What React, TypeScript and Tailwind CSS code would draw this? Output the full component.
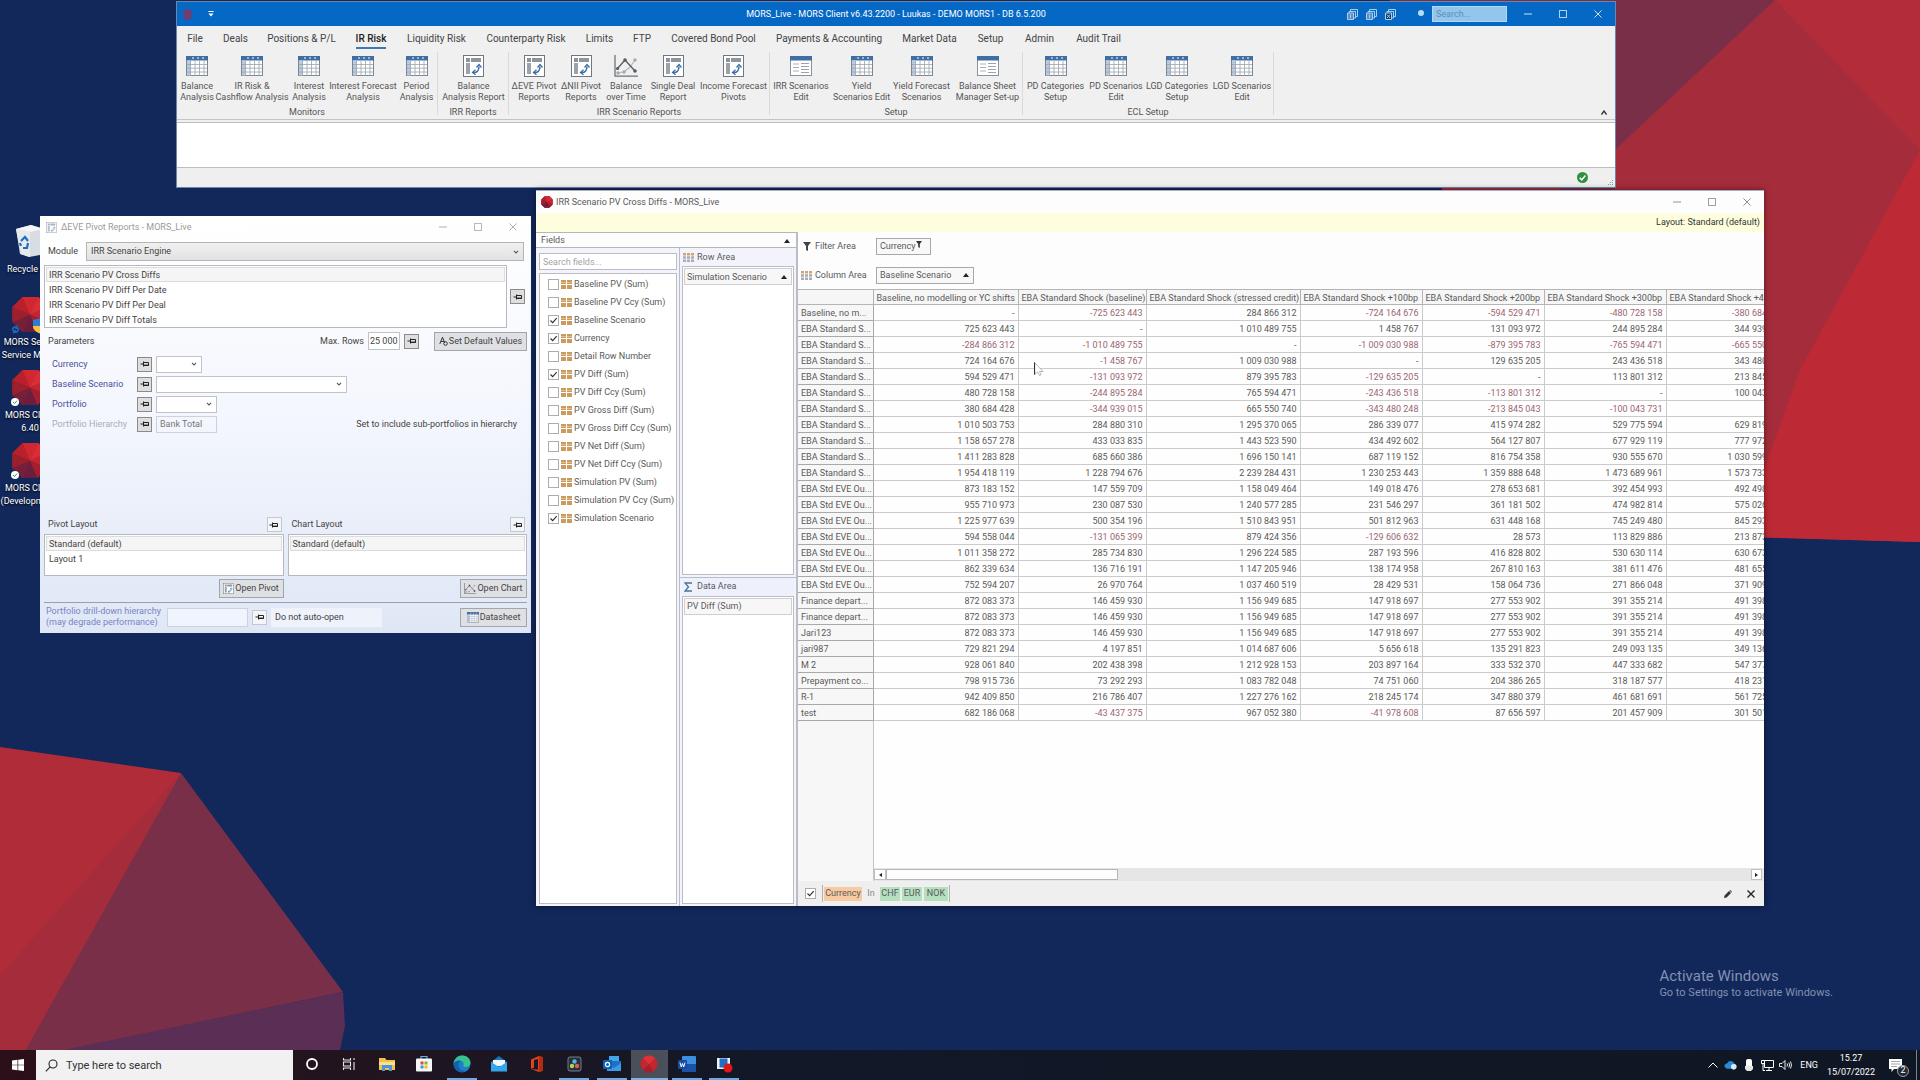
import React, { ReactNode } from "react";

/* ---------- small shared icons ---------- */

const PinIcon = () => (
  <svg viewBox="0 0 10 10" className="h-[10px] w-[10px]" fill="none" stroke="#222" strokeWidth="1">
    <path d="M0.5 5H3.5M3.5 2.5V7.5M3.5 3.5H8.5V6.5H3.5" />
    <path d="M3.5 6.3H8.5" strokeWidth="1.4" />
  </svg>
);

const TableIcon = ({ className = "h-5 w-[22px]" }: { className?: string }) => (
  <svg viewBox="0 0 22 20" className={className}>
    <rect x="0.5" y="0.5" width="21" height="19" fill="#fff" stroke="#7d8793" />
    <rect x="0" y="0" width="22" height="4.5" fill="#3f6ea5" />
    <rect x="1" y="4.5" width="3.5" height="15" fill="#b9cbe0" />
    <path d="M7 1.2v1.6M12 1.2v1.6M17 1.2v1.6" stroke="#dbe6f2" strokeWidth="1.6" />
    <path d="M4.5 5v15M9 5v15M13.5 5v15M18 5v15M1 8.5h20M1 12.2h20M1 16h20" stroke="#9aa3ad" strokeWidth="0.8" />
  </svg>
);

const FormIcon = () => (
  <svg viewBox="0 0 22 20" className="h-5 w-[22px]">
    <rect x="0.5" y="0.5" width="21" height="19" fill="#fff" stroke="#8a929b" />
    <rect x="0" y="0" width="22" height="4.5" fill="#3f6ea5" />
    <path d="M3 8h6M3 11.5h6M3 15h6" stroke="#a9b0b8" />
    <path d="M11 7.5h8M11 10.5h8M11 13.5h8M11 16.5h8" stroke="#9aa2ab" />
  </svg>
);

const PivotIcon = ({ className = "h-[22px] w-[21px]" }: { className?: string }) => (
  <svg viewBox="0 0 21 22" className={className}>
    <rect x="0.5" y="0.5" width="20" height="21" fill="#fff" stroke="#6f7780" />
    <rect x="3" y="3" width="4" height="4" fill="#8d949c" />
    <rect x="8" y="3" width="10" height="4" fill="#8d949c" />
    <rect x="3" y="8" width="4" height="11" fill="#9ba2a9" />
    <path d="M10 17.5c4 .5 6-2 6-6" fill="none" stroke="#3a6ea5" strokeWidth="1.5" />
    <path d="M13.5 12.5 16 9.5l2.5 3M12.5 14.8 9.5 17.4l3 2.4" fill="none" stroke="#3a6ea5" strokeWidth="1.3" />
  </svg>
);

const ChartIcon = ({ className = "h-[22px] w-[24px]" }: { className?: string }) => (
  <svg viewBox="0 0 24 22" className={className} fill="none">
    <path d="M1 0v21.2h23" stroke="#6d7379" strokeWidth="1.3" />
    <path d="M3 18 10 17 16 12 21 5" stroke="#b3b7bb" strokeWidth="1.2" />
    <path d="M3 14 11 5l10 11" stroke="#555b62" strokeWidth="1.3" />
    <g fill="#555b62">
      <circle cx="3.5" cy="13.5" r="1.6" />
      <circle cx="11" cy="5" r="1.8" />
      <circle cx="21" cy="16" r="1.8" />
    </g>
    <g fill="#a5aaaf">
      <circle cx="4" cy="18" r="1.7" />
      <circle cx="10" cy="17" r="1.7" />
      <circle cx="21" cy="5" r="1.7" />
    </g>
  </svg>
);

const Chevron = () => (
  <svg viewBox="0 0 6 4" className="pointer-events-none absolute right-[5px] top-1/2 h-1 w-[6px] -translate-y-1/2" fill="none" stroke="#555">
    <path d="M1 .8 3 3 5 .8" strokeWidth="1.1" />
  </svg>
);

const UpTriangle = () => (
  <svg viewBox="0 0 6 4" className="h-1 w-[6px]">
    <path d="M0 4 3 0l3 4z" fill="#222" />
  </svg>
);

const GridDots = () => (
  <svg viewBox="0 0 11 9" className="h-[9px] w-[11px]">
    <path d="M0 0h3v2.4H0zM4 0h3v2.4H4zM8 0h3v2.4H8z" fill="#c9a77c" />
    <path d="M0 3.3h3v2.4H0zM4 3.3h3v2.4H4zM8 3.3h3v2.4H8zM0 6.6h3V9H0zM4 6.6h3V9H4zM8 6.6h3V9H8z" fill="#a9adb2" />
  </svg>
);

const FieldIcon = () => (
  <svg viewBox="0 0 11 9" className="h-[9px] w-[11px] shrink-0">
    <path d="M0 0h5v4H0zM6 0h5v4H6zM0 5h5v4H0zM6 5h5v4H6z" fill="#cc9a5f" />
    <path d="M0 2.5h5M6 2.5h5" stroke="#e6cba8" strokeWidth=".7" />
  </svg>
);

const Gem = ({ className }: { className: string }) => (
  <svg viewBox="0 0 40 40" className={className}>
    <path d="M12 1h17l10 11v16L28 39H12L1 28V12z" fill="#b3222c" />
    <path d="M12 1 20 20 1 12z" fill="#b8202b" />
    <path d="M12 1h17L20 20z" fill="#cf2831" />
    <path d="M29 1l10 11-19 8z" fill="#d92e35" />
    <path d="M39 12v16L20 20z" fill="#c32630" />
    <path d="M39 28 28 39l-8-19z" fill="#a31f2e" />
    <path d="M28 39H12l8-19z" fill="#6a1d3d" />
    <path d="M12 39 1 28l19-8z" fill="#74203a" />
    <path d="M1 28V12l19 8z" fill="#9c1f2d" />
  </svg>
);

/* ---------- window chrome ---------- */

const WindowButtons = ({ className, gap }: { className: string; gap: string }) => (
  <div className={`flex items-center ${gap} ${className}`}>
    <button aria-label="Minimize" className="flex h-4 w-4 items-center justify-center">
      <svg viewBox="0 0 10 10" className="h-2 w-2" stroke="currentColor"><path d="M0 5h10" /></svg>
    </button>
    <button aria-label="Maximize" className="flex h-4 w-4 items-center justify-center">
      <svg viewBox="0 0 10 10" className="h-2 w-2" fill="none" stroke="currentColor"><path d="M.5.5h9v9h-9z" /></svg>
    </button>
    <button aria-label="Close" className="flex h-4 w-4 items-center justify-center">
      <svg viewBox="0 0 10 10" className="h-2 w-2" stroke="currentColor"><path d="M.5.5l9 9M9.500.5l-9 9" /></svg>
    </button>
  </div>
);

/* ---------- wallpaper ---------- */

const Wallpaper = () => (
  <svg viewBox="0 0 1920 1080" preserveAspectRatio="none" className="absolute inset-0 h-full w-full">
    <rect width="1920" height="1080" fill="#12275a" />
    <path d="M1390 0H1920V542L1764 537 1500 400z" fill="#a52d3b" />
    <path d="M1390 0H1775L1615 150V250z" fill="#7a2f49" />
    <path d="M1775 0H1920V150z" fill="#b32c39" />
    <path d="M1920 150V542L1740 537 1800 370z" fill="#bd2a36" />
    <path d="M0 747 181 773 0 1050z" fill="#b02c39" />
    <path d="M181 773 0 975V1060H20L110 1000z" fill="#a52d3b" />
    <path d="M181 773 343 992 20 1060z" fill="#7a2f49" />
    <path d="M343 992 345 1026 338 1060H15z" fill="#5a2e55" />
  </svg>
);

/* ---------- main client window ---------- */

const TABS: [string, string][] = [
  ["File", "w-9"],
  ["Deals", "w-[45px]"],
  ["Positions & P/L", "w-[87px]"],
  ["IR Risk", "w-[52px]"],
  ["Liquidity Risk", "w-[79px]"],
  ["Counterparty Risk", "w-[100px]"],
  ["Limits", "w-[47px]"],
  ["FTP", "w-[38px]"],
  ["Covered Bond Pool", "w-[105px]"],
  ["Payments & Accounting", "w-[126px]"],
  ["Market Data", "w-[75px]"],
  ["Setup", "w-[47px]"],
  ["Admin", "w-[51px]"],
  ["Audit Trail", "w-[67px]"],
];

type Tool = { a: string; b: string; w: string; icon: "table" | "form" | "pivot" | "chart" };
const GROUPS: { name: string; tools: Tool[] }[] = [
  {
    name: "Monitors",
    tools: [
      { a: "Balance", b: "Analysis", w: "w-10", icon: "table" },
      { a: "IR Risk &", b: "Cashflow Analysis", w: "w-[70px]", icon: "table" },
      { a: "Interest", b: "Analysis", w: "w-11", icon: "table" },
      { a: "Interest Forecast", b: "Analysis", w: "w-16", icon: "table" },
      { a: "Period", b: "Analysis", w: "w-[43px]", icon: "table" },
    ],
  },
  { name: "IRR Reports", tools: [{ a: "Balance", b: "Analysis Report", w: "w-[71px]", icon: "pivot" }] },
  {
    name: "IRR Scenario Reports",
    tools: [
      { a: "ΔEVE Pivot", b: "Reports", w: "w-[50px]", icon: "pivot" },
      { a: "ΔNII Pivot", b: "Reports", w: "w-11", icon: "pivot" },
      { a: "Balance", b: "over Time", w: "w-[46px]", icon: "chart" },
      { a: "Single Deal", b: "Report", w: "w-12", icon: "pivot" },
      { a: "Income Forecast", b: "Pivots", w: "w-[73px]", icon: "pivot" },
    ],
  },
  {
    name: "Setup",
    tools: [
      { a: "IRR Scenarios", b: "Edit", w: "w-[62px]", icon: "form" },
      { a: "Yield", b: "Scenarios Edit", w: "w-[59px]", icon: "table" },
      { a: "Yield Forecast", b: "Scenarios", w: "w-[61px]", icon: "table" },
      { a: "Balance Sheet", b: "Manager Set-up", w: "w-[71px]", icon: "form" },
    ],
  },
  {
    name: "ECL Setup",
    tools: [
      { a: "PD Categories", b: "Setup", w: "w-[65px]", icon: "table" },
      { a: "PD Scenarios", b: "Edit", w: "w-14", icon: "table" },
      { a: "LGD Categories", b: "Setup", w: "w-[66px]", icon: "table" },
      { a: "LGD Scenarios", b: "Edit", w: "w-16", icon: "table" },
    ],
  },
];

const ToolGlyph = ({ icon }: { icon: Tool["icon"] }) =>
  icon === "table" ? <TableIcon /> : icon === "form" ? <FormIcon /> : icon === "pivot" ? <PivotIcon /> : <ChartIcon />;

const StackIcon = ({ x }: { x?: boolean }) => (
  <svg viewBox="0 0 11 11" className="h-[11px] w-[11px]" fill="none" stroke="#a9cdf0" strokeWidth="1">
    <path d="M3.500 2.500V.5h7v7H8.500" />
    <path d="M2 4V2.500h6.500V9H7" />
    <path d="M.5 4h6v6.500h-6z" fill={x ? "#17395f" : "#5b8fc4"} />
    {x ? <path d="M2 5.500 5 9M5 5.500 2 9" /> : <path d="M3.500 5.500v3.500" />}
  </svg>
);

const MainWindow = () => (
  <section className="absolute left-[176px] top-px flex h-[187px] w-[1440px] flex-col border border-[#6d87a8] bg-[#f0f0f0]">
    <header className="relative flex h-6 shrink-0 items-center bg-[#0568c5] px-[6px] text-white">
      <span className="h-[11px] w-[9px] rounded-full bg-[#6b3f74]" />
      <svg viewBox="0 0 6 7" className="ml-4 h-[6px] w-[6px]"><path d="M0 0h6v1.200H0zM0 3h6L3 6.500z" fill="#fff" /></svg>
      <h1 className="absolute inset-x-0 text-center text-[9px] leading-3">MORS_Live - MORS Client v6.43.2200 - Luukas - DEMO MORS1 - DB 6.5.200</h1>
      <div className="relative ml-auto flex items-center">
        <div className="mr-[22px] flex gap-2">
          <StackIcon />
          <StackIcon />
          <StackIcon x />
        </div>
        <span className="mr-2 h-[6px] w-[6px] -translate-y-px rounded-full bg-[#b9dcfa]" />
        <input aria-label="Search" placeholder="Search..." className="h-4 w-[75px] border border-[#b7d8f3] bg-[#92c6ec] px-[3px] text-[9px] text-[#2e5f8f] placeholder-[#5d8db8]" />
        <WindowButtons className="ml-[13px] mr-[3px] text-white" gap="gap-[19px]" />
      </div>
    </header>

    <nav className="flex h-6 shrink-0 items-center text-[10px] leading-[13px] text-[#444]">
      {TABS.map(([t, w]) => (
        <button key={t} className={`flex justify-center whitespace-nowrap ${w}`}>
          <span className={t === "IR Risk" ? "mt-[5px] border-b-2 border-[#3d78b5] pb-0.5 font-medium text-[#222]" : ""}>{t}</span>
        </button>
      ))}
    </nav>

    <div className="flex h-[70px] shrink-0 border-b border-[#c4c4c4] pt-0.5 text-[9px] leading-[11px] text-[#555]">
      {GROUPS.map((g) => (
        <div key={g.name} className="mb-1 flex flex-col border-r border-[#dadada]">
          <div className="-mr-px flex">
            {g.tools.map((t) => (
              <button key={t.a + t.b} className={`flex flex-col items-center whitespace-nowrap ${t.w}`}>
                <span className="mb-px flex h-7 items-center"><ToolGlyph icon={t.icon} /></span>
                <span>{t.a}</span>
                <span>{t.b}</span>
              </button>
            ))}
          </div>
          <div className="mt-1 text-center">{g.name}</div>
        </div>
      ))}
      <button aria-label="Collapse ribbon" className="mb-1 ml-auto mr-2 self-end">
        <svg viewBox="0 0 6 5" className="h-[5px] w-[6px]" fill="none" stroke="#333" strokeWidth="1.300"><path d="M.5 4.500 3 1l2.500 3.500" /></svg>
      </button>
    </div>

    <div className="mt-0.5 flex-1 border-y border-[#bdbdbd] bg-white" />

    <footer className="relative flex h-[19px] shrink-0 items-center justify-end bg-[#efefef] pr-[27px]">
      <svg viewBox="0 0 12 12" className="h-[11px] w-[11px]">
        <circle cx="6" cy="6" r="6" fill="#2f9140" />
        <path d="M3 6.200 5.200 8.500 9.200 3.800" fill="none" stroke="#fff" strokeWidth="1.600" />
      </svg>
      <svg viewBox="0 0 6 6" className="absolute bottom-px right-px h-[6px] w-[6px]"><path d="M4 0h1v1H4zM2 2h1v1H2zM4 2h1v1H4zM0 4h1v1H0zM2 4h1v1H2zM4 4h1v1H4z" fill="#999" /></svg>
    </footer>
  </section>
);

/* ---------- pivot reports window ---------- */

const PinButton = ({ flat }: { flat?: boolean }) => (
  <button
    aria-label="Pin"
    className={`flex h-[15px] w-[15px] shrink-0 items-center justify-center border ${flat ? "border-[#c4c8d0] bg-[#f4f5f9]" : "border-[#8a8a8a] bg-[#dedede]"}`}
  >
    <PinIcon />
  </button>
);

const Combo = ({ id, width }: { id: string; width: string }) => (
  <div className={`relative ${width}`}>
    <select id={id} className="block h-[17px] w-full appearance-none border border-[#c0c3ca] bg-white"><option></option></select>
    <Chevron />
  </div>
);

const Param = ({ id, label, dim, children }: { id: string; label: string; dim?: boolean; children: ReactNode }) => (
  <div className="flex h-5 items-center">
    <label htmlFor={id} className={`w-[85px] ${dim ? "text-[#a9adb8]" : "text-[#4c4fa0]"}`}>{label}</label>
    <PinButton />
    <div className="ml-1 flex flex-1 items-center">{children}</div>
  </div>
);

const ListBox = ({ items, className = "" }: { items: string[]; className?: string }) => (
  <ul className={`border border-[#b5b8c0] bg-white p-px ${className}`}>
    {items.map((t, i) => (
      <li key={t} className={`flex h-[15px] items-center px-0.5 pt-px ${i === 0 ? "border border-[#dcdcdc] bg-[#f5f5f5]" : "border border-transparent"}`}>{t}</li>
    ))}
  </ul>
);

const GreyButton = ({ children, width }: { children: ReactNode; width: string }) => (
  <button className={`flex h-[19px] items-center justify-center gap-px whitespace-nowrap border border-[#a3a5ab] bg-[#dfe0e4] ${width}`}>{children}</button>
);

const ReportsWindow = () => (
  <section className="absolute left-10 top-[216px] flex h-[417px] w-[491px] flex-col bg-gradient-to-b from-white via-[#f3f6fd] to-[#dfe7f6] text-[9px] leading-[11px] text-[#444]">
    <header className="flex h-[22px] items-center pl-[6px] pr-[10px] text-[#9b9b9b]">
      <PivotIcon className="h-[11px] w-[11px] opacity-70" />
      <h2 className="ml-1">ΔEVE Pivot Reports - MORS_Live</h2>
      <WindowButtons className="ml-auto text-[#9b9b9b]" gap="gap-[19px]" />
    </header>

    <div className="mt-1 flex items-center pl-2 pr-[7px]">
      <label htmlFor="module" className="w-[38px]">Module</label>
      <div className="relative flex-1">
        <select id="module" className="block h-[19px] w-full appearance-none border border-[#b4b4b4] bg-gradient-to-b from-[#f0f0f0] to-[#e2e2e2] px-1">
          <option>IRR Scenario Engine</option>
        </select>
        <Chevron />
      </div>
    </div>

    <div className="mt-1 flex items-center gap-[3px] pl-1 pr-[6px]">
      <ListBox className="h-[63px] flex-1" items={["IRR Scenario PV Cross Diffs", "IRR Scenario PV Diff Per Date", "IRR Scenario PV Diff Per Deal", "IRR Scenario PV Diff Totals"]} />
      <PinButton />
    </div>

    <div className="mt-[3px] flex h-5 items-center pl-2 pr-1">
      <h3>Parameters</h3>
      <label htmlFor="max-rows" className="ml-auto">Max. Rows</label>
      <input id="max-rows" defaultValue="25 000" className="ml-1 h-[18px] w-8 border border-[#c0c3ca] bg-white px-px" />
      <span className="ml-1 mr-[15px] flex"><PinButton /></span>
      <GreyButton width="w-[93px]">
        <svg viewBox="0 0 9 10" className="h-[10px] w-[9px]" fill="none" stroke="#333">
          <path d="M.8 8 3.500 1.200 5.800 7M1.800 5.500h3" />
          <circle cx="6.500" cy="7.500" r="1.800" />
        </svg>
        Set Default Values
      </GreyButton>
    </div>

    <div className="mt-[3px] flex flex-col pl-3 pr-[14px]">
      <Param id="ccy" label="Currency"><Combo id="ccy" width="w-[46px]" /></Param>
      <Param id="base" label="Baseline Scenario"><Combo id="base" width="w-[191px]" /></Param>
      <Param id="port" label="Portfolio"><Combo id="port" width="w-[61px]" /></Param>
      <Param id="hier" label="Portfolio Hierarchy" dim>
        <input id="hier" readOnly defaultValue="Bank Total" className="h-[17px] w-[61px] border border-[#cdd1da] bg-transparent px-[3px] text-[#777]" />
        <span className="ml-auto">Set to include sub-portfolios in hierarchy</span>
      </Param>
    </div>

    <div className="mt-auto flex gap-1 px-1">
      {[
        { title: "Pivot Layout", items: ["Standard (default)", "Layout 1"], btn: "Open Pivot", w: "w-[65px]", icon: <PivotIcon className="h-[11px] w-[11px]" /> },
        { title: "Chart Layout", items: ["Standard (default)"], btn: "Open Chart", w: "w-[67px]", icon: <ChartIcon className="h-[11px] w-[12px]" /> },
      ].map((p) => (
        <div key={p.title} className="flex flex-1 flex-col">
          <div className="flex items-center justify-between px-0.5 pb-0.5">
            <h3 className="pl-0.5">{p.title}</h3>
            <PinButton flat />
          </div>
          <ListBox className="h-[42px]" items={p.items} />
          <div className="mt-[3px] flex justify-end"><GreyButton width={p.w}>{p.icon}{p.btn}</GreyButton></div>
        </div>
      ))}
    </div>

    <footer className="mx-1 mb-[5px] mt-1 flex items-center border-t border-[#9aa0aa] pt-[3px]">
      <label htmlFor="drill" className="w-[119px] whitespace-nowrap pl-0.5 text-[#7a84c4]">Portfolio drill-down hierarchy<br />(may degrade performance)</label>
      <input id="drill" className="ml-1 h-[19px] w-[81px] border border-[#ccd2de] bg-[#f0f4fc]" />
      <span className="mx-1 flex"><PinButton flat /></span>
      <input aria-label="Auto-open" readOnly defaultValue="Do not auto-open" className="h-[19px] w-[111px] bg-[#eef2fb] px-1" />
      <span className="ml-auto"><GreyButton width="w-[67px]"><TableIcon className="h-[11px] w-[12px]" /> Datasheet</GreyButton></span>
    </footer>
  </section>
);

/* ---------- cross diffs window ---------- */

const FIELDS: [string, boolean][] = [
  ["Baseline PV (Sum)", false],
  ["Baseline PV Ccy (Sum)", false],
  ["Baseline Scenario", true],
  ["Currency", true],
  ["Detail Row Number", false],
  ["PV Diff (Sum)", true],
  ["PV Diff Ccy (Sum)", false],
  ["PV Gross Diff (Sum)", false],
  ["PV Gross Diff Ccy (Sum)", false],
  ["PV Net Diff (Sum)", false],
  ["PV Net Diff Ccy (Sum)", false],
  ["Simulation PV (Sum)", false],
  ["Simulation PV Ccy (Sum)", false],
  ["Simulation Scenario", true],
];

const COLS: [string, string][] = [
  ["Baseline, no modelling or YC shifts", "w-[145px]"],
  ["EBA Standard Shock (baseline)", "w-[128px]"],
  ["EBA Standard Shock (stressed credit)", "w-[154px]"],
  ["EBA Standard Shock +100bp", "w-[122px]"],
  ["EBA Standard Shock +200bp", "w-[122px]"],
  ["EBA Standard Shock +300bp", "w-[122px]"],
  ["EBA Standard Shock +400bp", "w-[122px]"],
];

const ROWS: string[][] = [
  ["Baseline, no m...", "-", "-725 623 443", "284 866 312", "-724 164 676", "-594 529 471", "-480 728 158", "-380 684 428"],
  ["EBA Standard S...", "725 623 443", "-", "1 010 489 755", "1 458 767", "131 093 972", "244 895 284", "344 939 015"],
  ["EBA Standard S...", "-284 866 312", "-1 010 489 755", "-", "-1 009 030 988", "-879 395 783", "-765 594 471", "-665 550 740"],
  ["EBA Standard S...", "724 164 676", "-1 458 767", "1 009 030 988", "-", "129 635 205", "243 436 518", "343 480 248"],
  ["EBA Standard S...", "594 529 471", "-131 093 972", "879 395 783", "-129 635 205", "-", "113 801 312", "213 845 043"],
  ["EBA Standard S...", "480 728 158", "-244 895 284", "765 594 471", "-243 436 518", "-113 801 312", "-", "100 043 731"],
  ["EBA Standard S...", "380 684 428", "-344 939 015", "665 550 740", "-343 480 248", "-213 845 043", "-100 043 731", "-"],
  ["EBA Standard S...", "1 010 503 753", "284 880 310", "1 295 370 065", "286 339 077", "415 974 282", "529 775 594", "629 819 325"],
  ["EBA Standard S...", "1 158 657 278", "433 033 835", "1 443 523 590", "434 492 602", "564 127 807", "677 929 119", "777 972 850"],
  ["EBA Standard S...", "1 411 283 828", "685 660 386", "1 696 150 141", "687 119 152", "816 754 358", "930 555 670", "1 030 599 401"],
  ["EBA Standard S...", "1 954 418 119", "1 228 794 676", "2 239 284 431", "1 230 253 443", "1 359 888 648", "1 473 689 961", "1 573 733 691"],
  ["EBA Std EVE Ou...", "873 183 152", "147 559 709", "1 158 049 464", "149 018 476", "278 653 681", "392 454 993", "492 498 724"],
  ["EBA Std EVE Ou...", "955 710 973", "230 087 530", "1 240 577 285", "231 546 297", "361 181 502", "474 982 814", "575 026 545"],
  ["EBA Std EVE Ou...", "1 225 977 639", "500 354 196", "1 510 843 951", "501 812 963", "631 448 168", "745 249 480", "845 293 211"],
  ["EBA Std EVE Ou...", "594 558 044", "-131 065 399", "879 424 356", "-129 606 632", "28 573", "113 829 886", "213 873 616"],
  ["EBA Std EVE Ou...", "1 011 358 272", "285 734 830", "1 296 224 585", "287 193 596", "416 828 802", "530 630 114", "630 673 844"],
  ["EBA Std EVE Ou...", "862 339 634", "136 716 191", "1 147 205 946", "138 174 958", "267 810 163", "381 611 476", "481 655 206"],
  ["EBA Std EVE Ou...", "752 594 207", "26 970 764", "1 037 460 519", "28 429 531", "158 064 736", "271 866 048", "371 909 779"],
  ["Finance depart...", "872 083 373", "146 459 930", "1 156 949 685", "147 918 697", "277 553 902", "391 355 214", "491 398 945"],
  ["Finance depart...", "872 083 373", "146 459 930", "1 156 949 685", "147 918 697", "277 553 902", "391 355 214", "491 398 945"],
  ["Jari123", "872 083 373", "146 459 930", "1 156 949 685", "147 918 697", "277 553 902", "391 355 214", "491 398 945"],
  ["jari987", "729 821 294", "4 197 851", "1 014 687 606", "5 656 618", "135 291 823", "249 093 135", "349 136 866"],
  ["M 2", "928 061 840", "202 438 398", "1 212 928 153", "203 897 164", "333 532 370", "447 333 682", "547 377 412"],
  ["Prepayment co...", "798 915 736", "73 292 293", "1 083 782 048", "74 751 060", "204 386 265", "318 187 577", "418 231 308"],
  ["R-1", "942 409 850", "216 786 407", "1 227 276 162", "218 245 174", "347 880 379", "461 681 691", "561 725 422"],
  ["test", "682 186 068", "-43 437 375", "967 052 380", "-41 978 608", "87 656 597", "201 457 909", "301 501 640"],
];

const CheckBox = ({ id, checked }: { id: string; checked: boolean }) => (
  <span className="relative flex h-[11px] w-[11px] shrink-0">
    <input id={id} type="checkbox" defaultChecked={checked} className="peer h-[11px] w-[11px] appearance-none border border-[#adadad] bg-white" />
    <svg viewBox="0 0 11 11" className="pointer-events-none absolute inset-0 hidden h-[11px] w-[11px] peer-checked:block" fill="none" stroke="#333" strokeWidth="1.200">
      <path d="M2.500 5.500 4.700 7.700 8.700 3.200" />
    </svg>
  </span>
);

const FieldsPanel = () => (
  <aside className="flex w-[262px] shrink-0 flex-col border-r-2 border-[#b9bcc9] bg-[#f3f4fb] text-[9px] leading-[11px]">
    <header className="flex h-4 shrink-0 items-center justify-between border-b border-t border-[#b5b5bb] bg-[#fdfdfd] pl-[5px] pr-[6px] pt-px">
      <h3>Fields</h3>
      <UpTriangle />
    </header>
    <div className="flex min-h-0 flex-1">
      <div className="flex w-[144px] flex-col border-r border-[#b9bcc9] pb-0.5 pl-[3px] pr-0.5 pt-[5px]">
        <input aria-label="Search fields" placeholder="Search fields..." className="h-[17px] shrink-0 border border-[#bcbcc2] bg-white px-[3px] placeholder-[#a5a5a5]" />
        <ul className="mt-[3px] flex-1 border border-[#bcbcc2] bg-white pt-px">
          {FIELDS.map(([name, on]) => (
            <li key={name} className="flex h-[18px] items-center whitespace-nowrap pl-2">
              <CheckBox id={`f-${name}`} checked={on} />
              <label htmlFor={`f-${name}`} className="ml-0.5 flex items-center gap-0.5">
                <FieldIcon />
                {name}
              </label>
            </li>
          ))}
        </ul>
      </div>
      <div className="flex flex-1 flex-col pb-0.5">
        <div className="flex flex-1 flex-col px-0.5">
          <h3 className="flex h-[18px] items-center gap-[3px] pl-px"><GridDots />Row Area</h3>
          <div className="flex-1 border border-[#bcbcc2] bg-white p-px">
            <button className="flex h-[17px] w-full items-center justify-between border border-[#cfcfd3] bg-[#f7f7f8] pl-[2px] pr-1 pt-px">Simulation Scenario<UpTriangle /></button>
          </div>
        </div>
        <div className="mt-0.5 flex flex-1 flex-col border-t border-[#b9bcc9] px-0.5">
          <h3 className="flex h-[18px] items-center gap-[5px] bg-[#eef1fb] pl-0.5">
            <svg viewBox="0 0 8 10" className="h-[10px] w-2" fill="none" stroke="#4a7396" strokeWidth="1.300"><path d="M8 1H1l3.500 4L1 9h7" /></svg>
            Data Area
          </h3>
          <div className="flex-1 border border-[#bcbcc2] bg-white p-px">
            <button className="flex h-[17px] w-full items-center border border-[#cfcfd3] bg-[#f7f7f8] pl-[2px] pt-px">PV Diff (Sum)</button>
          </div>
        </div>
      </div>
    </div>
  </aside>
);

const CrossDiffsWindow = () => (
  <section className="absolute left-[536px] top-[190px] flex h-[716px] w-[1228px] flex-col border-t border-[#a9acc0] bg-[#fdfdfd] text-[9px] leading-[11px] text-[#5a5a5a] shadow-[0_0_6px_rgba(0,0,0,0.5)]">
    <header className="flex h-[22px] shrink-0 items-center pl-[5px] pr-[9px]">
      <Gem className="h-3 w-3" />
      <h2 className="ml-[3px]">IRR Scenario PV Cross Diffs - MORS_Live</h2>
      <WindowButtons className="ml-auto text-[#777]" gap="gap-[19px]" />
    </header>
    <div className="flex h-[19px] shrink-0 items-center justify-end bg-[#fefede] pr-1 text-[#333]">Layout: Standard (default)</div>

    <div className="flex min-h-0 flex-1">
      <FieldsPanel />
      <div className="flex min-w-0 flex-1 flex-col">
        <div className="flex h-[29px] shrink-0 items-center pl-[5px]">
          <svg viewBox="0 0 8 9" className="h-[9px] w-2"><path d="M0 0h8L5 4v5L3 8V4z" fill="#444" /></svg>
          <span className="ml-1 w-[61px]">Filter Area</span>
          <button className="flex h-[17px] w-[55px] items-center border border-[#a9a9ad] bg-[#f8f8f9] pl-[3px]">
            Currency
            <svg viewBox="0 0 6 7" className="mb-[5px] h-[7px] w-[6px]"><path d="M0 0h6L3.800 3v4L2.200 6V3z" fill="#333" /></svg>
          </button>
        </div>
        <div className="flex h-7 shrink-0 items-center pl-[3px]">
          <GridDots />
          <span className="ml-[3px] w-[61px]">Column Area</span>
          <button className="flex h-[17px] w-[98px] items-center justify-between border border-[#a9a9ad] bg-[#f8f8f9] pl-[3px] pr-1">Baseline Scenario<UpTriangle /></button>
        </div>

        <div className="flex min-h-0 flex-1 flex-col overflow-hidden bg-gradient-to-r from-[#f7f7f7] from-[75px] to-[#fefefe] to-[75px]">
          <table className="w-[990px] table-fixed border-collapse">
            <thead>
              <tr className="h-[15px] bg-[#f6f6f6]">
                <th className="w-[75px] border-y border-r border-[#b4b4b4]" />
                {COLS.map(([c, w]) => (
                  <th key={c} className={`whitespace-nowrap border border-[#b4b4b4] p-0 pl-[3px] pt-0.5 text-left font-normal ${w}`}>{c}</th>
                ))}
              </tr>
            </thead>
            <tbody>
              {ROWS.map((r, i) => (
                <tr key={i} className="h-4">
                  <th className="whitespace-nowrap border-y border-r border-[#a9a9a9] bg-[#f7f7f7] p-0 pl-[3px] pt-0.5 text-left font-normal">{r[0]}</th>
                  {r.slice(1).map((v, j) => (
                    <td key={j} className={`whitespace-nowrap border border-[#cbcbcb] bg-[#fefefe] p-0 pr-[3px] pt-0.5 text-right ${v.length > 1 && v[0] === "-" ? "text-[#9c6572]" : ""}`}>{v}</td>
                  ))}
                </tr>
              ))}
            </tbody>
          </table>
          <div className="ml-[75px] flex-1 border-l border-[#c4c4c4]" />
          <div className="ml-[75px] flex h-[13px] shrink-0 items-center border-l border-[#c4c4c4] bg-[#e6e6e6] pr-0.5">
            <button aria-label="Scroll left" className="flex h-[11px] w-3 items-center justify-center border border-[#c0c0c0] bg-white"><svg viewBox="0 0 3 4" className="h-1 w-[3px]"><path d="M3 0v4L0 2z" fill="#222" /></svg></button>
            <div className="h-[11px] w-[232px] border border-[#b5b5b5] bg-[#fdfdfd]" />
            <button aria-label="Scroll right" className="ml-auto flex h-[11px] w-[11px] items-center justify-center border border-[#c0c0c0] bg-white"><svg viewBox="0 0 3 4" className="h-1 w-[3px]"><path d="M0 0v4l3-2z" fill="#222" /></svg></button>
          </div>
        </div>

        <footer className="flex h-[25px] shrink-0 items-center bg-[#efefef] pl-[7px] pr-[9px]">
          <CheckBox id="filter-on" checked />
          <label htmlFor="filter-on" className="ml-[6px] flex h-[17px] items-center gap-0.5 border-x border-[#b0b0b0] px-px">
            <span className="flex h-[14px] w-[38px] items-center justify-center bg-[#f7caa1]">Currency</span>
            <span className="w-[14px] text-center text-[#888]">In</span>
            <span className="flex h-[14px] w-5 items-center justify-center bg-[#b4e0c0]">CHF</span>
            <span className="flex h-[14px] w-5 items-center justify-center bg-[#b4e0c0]">EUR</span>
            <span className="flex h-[14px] w-6 items-center justify-center bg-[#b4e0c0]">NOK</span>
          </label>
          <button aria-label="Edit filter" className="ml-auto mr-[15px]">
            <svg viewBox="0 0 8 8" className="h-2 w-2"><path d="M0 8l.6-2.600L5 1l2 2-4.400 4.400zM5.500.5 6.200 0 8 1.800l-.5.700z" fill="#333" /></svg>
          </button>
          <button aria-label="Clear filter">
            <svg viewBox="0 0 8 8" className="h-2 w-2" stroke="#222" strokeWidth="1.400"><path d="M.5.5l7 7M7.500.5l-7 7" /></svg>
          </button>
        </footer>
      </div>
    </div>
  </section>
);

/* ---------- desktop shortcuts ---------- */

const Shortcut = ({ lines, children }: { lines: string[]; children: ReactNode }) => (
  <div className="flex h-[73px] w-[60px] flex-col items-center">
    <div className="relative flex h-10 w-[38px] items-center justify-center">{children}</div>
    <div className="mt-0.5 whitespace-nowrap text-center text-[9px] leading-[13px] text-white [text-shadow:0_1px_2px_#000]">
      {lines.map((l) => <div key={l}>{l}</div>)}
    </div>
  </div>
);

const OkBadge = () => (
  <svg viewBox="0 0 8 8" className="absolute bottom-px left-0 h-2 w-2"><circle cx="4" cy="4" r="4" fill="#fff" /><path d="M2 4l1.500 1.500L6 2.700" fill="none" stroke="#2f9140" /></svg>
);

const Shortcuts = () => (
  <div className="absolute left-0 top-[221px] flex flex-col">
    <Shortcut lines={["Recycle Bin"]}>
      <svg viewBox="0 0 30 34" className="h-[34px] w-[30px]">
        <path d="M1 5 16 1l13 4-4 26-11 2-9-3z" fill="#d7dde3" />
        <path d="M1 5l14 3 14-3-13-4z" fill="#f4f6f8" />
        <path d="M15 8v25l-9-3L1 5z" fill="#e6eaee" />
        <path d="M6 17l4-4 3 4M13 19l-1 5H8M6 22l-1-3" fill="none" stroke="#1f6fc0" strokeWidth="2.200" />
      </svg>
    </Shortcut>
    <Shortcut lines={["MORS Server", "Service Man..."]}>
      <Gem className="h-[37px] w-[38px]" />
      <svg viewBox="0 0 10 10" className="absolute bottom-0 left-0 h-[9px] w-[9px]" fill="none" stroke="#1f66b5" strokeWidth="1.800"><path d="M2 6a3 3 0 0 1 5-3M8 4a3 3 0 0 1-5 3M7 .5V3.500H4.500M3 9.500V6.500h2.500" /></svg>
      <svg viewBox="0 0 16 16" className="absolute bottom-0 right-0 h-4 w-4"><path d="M0 2 8 0v8H0z" fill="#2b7cd3" /><path d="M8 0l8 2v6H8z" fill="#f6c443" /><path d="M0 8h8v8C3 14 0 12 0 8z" fill="#f6c443" /><path d="M8 8h8c0 4-3 6-8 8z" fill="#2b7cd3" /></svg>
    </Shortcut>
    <Shortcut lines={["MORS Client", "6.40"]}><Gem className="h-[37px] w-[38px]" /><OkBadge /></Shortcut>
    <Shortcut lines={["MORS Client", "(Development)"]}><Gem className="h-[37px] w-[38px]" /><OkBadge /></Shortcut>
  </div>
);

/* ---------- taskbar ---------- */

const APPS: { name: string; open?: boolean; active?: boolean; art: ReactNode }[] = [
  { name: "Cortana", art: <circle cx="9" cy="9" r="5" fill="none" stroke="#fff" strokeWidth="1.800" /> },
  { name: "Task view", art: <path d="M3.500 3v2h7V3M3.500 15v-2h7v2M3.500 7h7v4h-7zM14 3v2M14 7v8" fill="none" stroke="#e8e8e8" strokeWidth="1.100" /> },
  { name: "File Explorer", art: <><path d="M1 3h6l1.500 2H17v10H1z" fill="#f3c04f" /><path d="M1 7h16v3H1z" fill="#fbe08d" /><path d="M4 10h10v6h-3v-3H7v3H4z" fill="#4a96d8" /></> },
  { name: "Store", art: <><path d="M6 4V1.500h6V4" fill="none" stroke="#5fb3ea" strokeWidth="1.200" /><rect x="1" y="3.500" width="16" height="13" rx="1" fill="#f5f5f5" /><path d="M5.500 6.500h3v3h-3z" fill="#e8482c" /><path d="M9.500 6.500h3v3h-3z" fill="#7ab829" /><path d="M5.500 10.500h3v3h-3z" fill="#2a9fe0" /><path d="M9.500 10.500h3v3h-3z" fill="#f5b81f" /></> },
  { name: "Edge", open: true, art: <><circle cx="9" cy="9" r="8.500" fill="#1b7fce" /><path d="M.6 9C1 3.500 5 .5 9.200.5c5 0 8.300 3.500 8.300 7 0 3-2.500 4.500-5 4.500-2 0-2.500-1-2-2 .8-2-1-4.500-4-4.500S1 7.500.6 9z" fill="#39c18f" /><path d="M6 8c-1.500 4 1.500 8.500 7 8 -6 3-12-1-12.400-7C1.500 6.500 4 5.500 6.500 5.600 8 5.700 6.500 6.500 6 8z" fill="#1560ac" /></> },
  { name: "Mail", art: <><path d="M1 7 9 1l8 6v9H1z" fill="#1674c4" /><path d="M3 5h12v6H3z" fill="#f2f8fd" /><path d="M1 7l8 5 8-5v9.500H1z" fill="#35a6ec" /></> },
  { name: "Office", art: <><path d="M3 4.500 11 1l4 1.300v13.400L11 17 3 14l7 .8V4L6 5v7.500L3 14z" fill="#e2431e" /><path d="M11 1l4 1.300v13.400L11 17z" fill="#b32a12" /></> },
  { name: "Resolve", open: true, art: <><rect x="3" y="2" width="13" height="14" rx="2" fill="#25303b" stroke="#8b98a5" strokeWidth=".8" /><circle cx="9.500" cy="6.500" r="2.200" fill="#56b7d8" /><circle cx="7" cy="11" r="2.200" fill="#b9d05a" /><circle cx="12" cy="11" r="2.200" fill="#de5b56" /></> },
  { name: "Outlook", open: true, art: <><path d="M6 1h10v6H6z" fill="#41a5e8" /><path d="M4 6h14v10H4z" fill="#1d72c6" /><path d="M4 8l7 5 7-5v8H4z" fill="#3b9ae6" /><rect x="0" y="5" width="9" height="9" rx="1" fill="#0f5fb4" /><circle cx="4.500" cy="9.500" r="2.100" fill="none" stroke="#fff" strokeWidth="1.200" /></> },
  { name: "MORS", active: true, art: <><circle cx="9" cy="9" r="8.500" fill="#c4252e" /><path d="M9 9 3 3a8.500 8.500 0 0 1 12 0z" fill="#d9343a" /><path d="M9 9 3 15a8.500 8.500 0 0 0 10 1.500z" fill="#a3202e" /></> },
  { name: "Word", open: true, art: <><rect x="4" y="1" width="14" height="16" rx="1" fill="#3b8ee0" /><path d="M4 9h14v7q0 1-1 1H5q-1 0-1-1z" fill="#1b52a8" /><rect x="0" y="5" width="9" height="9" rx="1" fill="#154ba3" /><path d="M2 7.500 3.300 12 4.500 8.500 5.700 12 7 7.500" fill="none" stroke="#fff" /></> },
  { name: "Recorder", open: true, art: <><path d="M2 3h13v11H2z" fill="#f0f0f0" /><path d="M4.500 3.500h8v9h-8z" fill="#1f6fc4" /><circle cx="13" cy="13" r="4.500" fill="#e01616" /></> },
];

const Taskbar = () => (
  <footer className="relative flex h-[30px] w-full shrink-0 items-center bg-gradient-to-r from-[#2c0f18] via-[#111827] via-40% to-[#0f1724] text-[9px] leading-3 text-white">
    <button aria-label="Start" className="flex h-full w-9 items-center justify-center">
      <svg viewBox="0 0 12 12" className="h-3 w-3" fill="#fff"><path d="M0 1.600 5.500.8v4.900H0zM6.200.7 12 0v5.700H6.200zM0 6.300h5.500v4.900L0 10.400zM6.200 6.300H12V12l-5.800-.8z" /></svg>
    </button>
    <label className="flex h-full w-[257px] items-center gap-2 bg-[#f1f1f1] pl-[9px] pt-px">
      <svg viewBox="0 0 13 13" className="h-[13px] w-[13px]" fill="none" stroke="#222" strokeWidth="1.100"><circle cx="8" cy="5" r="4" /><path d="M5.200 7.800.8 12.300" /></svg>
      <input placeholder="Type here to search" className="flex-1 bg-transparent text-[11px] placeholder-[#333] outline-none" />
    </label>
    <div className="flex h-full w-[450px]">
      {APPS.map((a) => (
        <button
          key={a.name}
          aria-label={a.name}
          className={`flex h-full flex-1 items-center justify-center border-b-2 ${a.active ? "border-[#7fb2e6] bg-[#4a4f5a]" : "border-transparent"}`}
        >
          <span className="relative flex h-full items-center">
            <svg viewBox="0 0 18 18" className="h-[18px] w-[18px]">{a.art}</svg>
            {a.open ? <span className="absolute -bottom-0.5 -left-[6px] h-0.5 w-[30px] bg-[#6fa9e0]" /> : null}
          </span>
        </button>
      ))}
    </div>
    <div className="ml-auto flex h-full items-center">
      <svg viewBox="0 0 10 6" className="mr-[6px] h-[6px] w-[10px]" fill="none" stroke="#fff"><path d="M.5 5.500 5 1l4.500 4.500" /></svg>
      <svg viewBox="0 0 14 10" className="mr-2 h-[10px] w-[13px]"><path d="M1 7.500A3 3 0 0 1 3.500 3 4 4 0 0 1 11 3.500 3 3 0 0 1 12 9H3z" fill="#2a8ad8" /><circle cx="10.500" cy="7" r="3" fill="#dfe9f2" /></svg>
      <svg viewBox="0 0 8 13" className="mr-2 h-[13px] w-2"><rect x="1" y="0" width="6" height="9" rx="2" fill="#fff" /><path d="M0 7h8v3L6 12H2L0 10z" fill="#e6e6e6" /></svg>
      <svg viewBox="0 0 13 12" className="mr-[5px] h-3 w-[13px]" fill="none" stroke="#fff"><path d="M3.500 1.500h9v7h-9zM8 8.500v2.500M5 11.500h6M.5 1.500h3v3h-3zM2 4.500v7h2" /></svg>
      <svg viewBox="0 0 13 12" className="mr-2 h-3 w-[13px]" fill="none" stroke="#fff"><path d="M.5 4.500H3L6 1.500v9L3 7.500H.5zM8 4.500q1 1.500 0 3M9.800 3.500q1.700 2.500 0 5M11.500 2.500q2 3.500 0 7" strokeWidth=".9" /></svg>
      <span>ENG</span>
      <div className="ml-2 w-[50px] text-center leading-[14px]">15.27<br />15/07/2022</div>
      <button aria-label="Notifications" className="relative ml-[13px] mr-[14px]">
        <svg viewBox="0 0 13 13" className="h-[13px] w-[13px]"><path d="M0 0h13v10H5l-2.500 3v-3H0z" fill="#fff" /><path d="M2 2.500h9M2 5h9M2 7.500h6" stroke="#8b9099" strokeWidth=".8" /></svg>
        <span className="absolute -bottom-[5px] -right-[7px] flex h-3 w-3 items-center justify-center rounded-full border border-[#9aa0a8] bg-[#232a36] text-[9px] leading-none">2</span>
      </button>
      <span className="mr-[3px] h-full w-px bg-[#7d828b]" />
    </div>
  </footer>
);

export default function App() {
  return (
    <main className="flex h-screen w-full flex-col overflow-hidden bg-[#12275a] font-[Roboto,sans-serif]">
      <div className="relative min-h-0 w-full flex-1">
        <div className="absolute inset-x-0 top-0 h-screen"><Wallpaper /></div>
        <Shortcuts />
        <MainWindow />
        <ReportsWindow />
        <CrossDiffsWindow />
        <svg viewBox="0 0 10 14" className="absolute left-[1034px] top-[362px] h-[14px] w-[10px]"><path d="M.5.5v12l3-2.500 2 3.500 1.500-.7L5.500 9.500H9z" fill="#fff" stroke="#999" strokeWidth=".7" /><path d="M.6.500v12" stroke="#222" /></svg>
        <div className="absolute bottom-[49px] right-[87px] text-[#8291b0]">
          <p className="text-[15px] leading-[18px]">Activate Windows</p>
          <p className="text-[11px] leading-4">Go to Settings to activate Windows.</p>
        </div>
      </div>
      <Taskbar />
    </main>
  );
}
